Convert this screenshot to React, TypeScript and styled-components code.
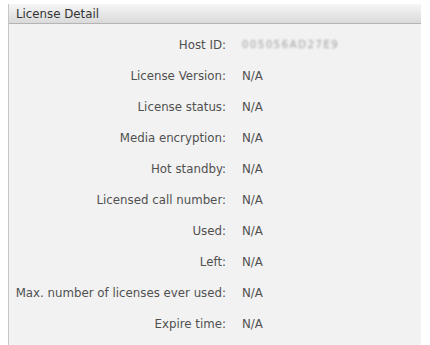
import React from "react";
import styled, { createGlobalStyle } from "styled-components";

const Global = createGlobalStyle`
  html, body { margin: 0; padding: 0; background: #ffffff; }
  body { font-family: "DejaVu Sans", Verdana, sans-serif; }
`;

const Page = styled.div`
  padding: 4px 9px 0 8px;
  height: 341px;
  overflow: hidden;
`;

const Panel = styled.section`
  width: 413px;
  height: 360px;
  background: #f2f2f2;
  border-left: 1px solid #c6c6c6;
  box-sizing: border-box;
`;

const Header = styled.div`
  height: 20px;
  box-sizing: border-box;
  background: linear-gradient(#f6f6f6, #dadada);
  border-bottom: 1px solid #b4b4b4;
  display: flex;
  align-items: center;
  padding-left: 7px;
  font-size: 11.8px;
  color: #333;
`;

const Rows = styled.div`
  display: grid;
  grid-template-columns: 217px auto;
  column-gap: 16px;
  grid-auto-rows: 31px;
  padding-top: 5px;
  font-size: 11.8px;
  color: #505050;
`;

const Label = styled.div`
  text-align: right;
  align-self: center;
  white-space: nowrap;
`;

const Value = styled.div<{ $blur?: boolean }>`
  align-self: center;
  white-space: nowrap;
  ${(p) =>
    p.$blur
      ? `color: #a0a0a0; filter: blur(0.9px); font-size: 10px; letter-spacing: 1.6px;`
      : ``}
`;

const data: [string, string, boolean?][] = [
  ["Host ID:", "005056AD27E9", true],
  ["License Version:", "N/A"],
  ["License status:", "N/A"],
  ["Media encryption:", "N/A"],
  ["Hot standby:", "N/A"],
  ["Licensed call number:", "N/A"],
  ["Used:", "N/A"],
  ["Left:", "N/A"],
  ["Max. number of licenses ever used:", "N/A"],
  ["Expire time:", "N/A"],
];

export default function App() {
  return (
    <>
      <Global />
      <Page>
        <Panel>
          <Header>License Detail</Header>
          <Rows>
            {data.map(([l, v, b]) => (
              <React.Fragment key={l}>
                <Label>{l}</Label>
                <Value $blur={b}>{v}</Value>
              </React.Fragment>
            ))}
          </Rows>
        </Panel>
      </Page>
    </>
  );
}
